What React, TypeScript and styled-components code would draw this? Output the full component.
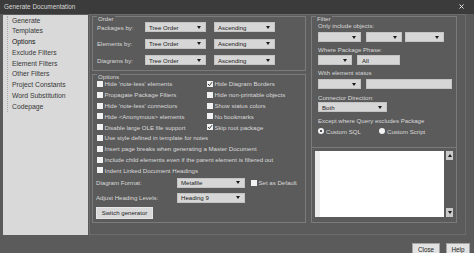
import { Fragment } from 'react';
import styled, { createGlobalStyle } from 'styled-components';

const GlobalStyle = createGlobalStyle`
	html, body {
		margin: 0;
		padding: 0;
		width: 474px;
		height: 253px;
		overflow: hidden;
		background: #5b5b5b;
	}
	* {
		box-sizing: border-box;
	}
`;

const fg = '#d9d9d9';
const bg = '#5b5b5b';
const line = '#7b7b7b';

const Arrow = ({ up }: { up?: boolean }) => (
	<svg width='4' height='3' viewBox='0 0 4 3'>
		<polygon points={up ? '0,3 4,3 2,0' : '0,0 4,0 2,3'} fill='#1a1a1a' />
	</svg>
);

const Tick = () => (
	<svg width='6' height='6' viewBox='0 0 6 6'>
		<polyline points='1,3 2.4,4.6 5,1.2' fill='none' stroke='#222' strokeWidth='0.9' />
	</svg>
);

const App = () => {
	const tree = [
		'Generate',
		'Templates',
		'Options',
		'Exclude Filters',
		'Element Filters',
		'Other Filters',
		'Project Constants',
		'Word Substitution',
		'Codepage',
	];
	const pairs: [string, boolean, string, boolean][] = [
		["Hide 'note-less' elements", false, 'Hide Diagram Borders', true],
		['Propagate Package Filters', false, 'Hide non-printable objects', false],
		["Hide 'note-less' connectors", false, 'Show status colors', false],
		['Hide <Anonymous> elements', false, 'No bookmarks', false],
		['Disable large OLE file support', false, 'Skip root package', true],
	];
	const singles = [
		'Use style defined in template for notes',
		'Insert page breaks when generating a Master Document',
		'Include child elements even if the parent element is filtered out',
		'Indent Linked Document Headings',
	];

	return (
		<>
			<GlobalStyle />
			<Window>
				<TitleBar>
					<span>Generate Documentation</span>
					<svg width='5' height='5' viewBox='0 0 5 5'>
						<path d='M0.5 0.5 L4.5 4.5 M4.5 0.5 L0.5 4.5' stroke='#e8e8e8' strokeWidth='1' />
					</svg>
				</TitleBar>
				<Body>
					<Tree>
						<TreeList>
							{tree.map((t) => (
								<TreeItem key={t} $active={t === 'Options'}>
									{t}
								</TreeItem>
							))}
						</TreeList>
					</Tree>
					<Frame>
						<LeftCol>
							<Group $h={55}>
								<Legend>Order</Legend>
								<OrderRows>
									{['Packages by:', 'Elements by:', 'Diagrams by:'].map((l) => (
										<Row key={l}>
											<RowLabel $w={48}>{l}</RowLabel>
											<Select $w={61}>
												Tree Order
												<Arrow />
											</Select>
											<Select $w={61} $ml={8}>
												Ascending
												<Arrow />
											</Select>
										</Row>
									))}
								</OrderRows>
							</Group>
							<Group $h={149}>
								<Legend>Options</Legend>
								<OptionsBody>
									<CheckGrid>
										{pairs.map(([a, ac, b, bc]) => (
											<Fragment key={a}>
												<Check>
													<Box>{ac && <Tick />}</Box>
													{a}
												</Check>
												<Check>
													<Box>{bc && <Tick />}</Box>
													{b}
												</Check>
											</Fragment>
										))}
									</CheckGrid>
									{singles.map((s) => (
										<Check key={s}>
											<Box />
											{s}
										</Check>
									))}
									<FormatRow $mt={2.2}>
										<RowLabel $w={81}>Diagram Format:</RowLabel>
										<Select $w={68}>
											Metafile
											<Arrow />
										</Select>
										<Check $ml={6}>
											<Box />
											Set as Default
										</Check>
									</FormatRow>
									<FormatRow $mt={5}>
										<RowLabel $w={81}>Adjust Heading Levels:</RowLabel>
										<Select $w={68}>
											Heading 9
											<Arrow />
										</Select>
									</FormatRow>
									<SwitchButton>Switch generator</SwitchButton>
								</OptionsBody>
							</Group>
						</LeftCol>
						<Group $h={207} $w={146}>
							<Legend>Filter</Legend>
							<FilterBody>
								<Caption $mt={3}>Only include objects:</Caption>
								<Row $mt={3}>
									<Select $w={43}>
										<Arrow />
									</Select>
									<Select $w={36} $ml={5}>
										<Arrow />
									</Select>
									<Select $w={39} $ml={3}>
										<Arrow />
									</Select>
								</Row>
								<Caption $mt={4}>Where Package Phase:</Caption>
								<Row $mt={2}>
									<Select $w={34}>
										<Arrow />
									</Select>
									<TextBox $w={43} $ml={5}>
										All
									</TextBox>
								</Row>
								<Caption $mt={3.5}>With element status</Caption>
								<Row $mt={3.5}>
									<Select $w={43}>
										<Arrow />
									</Select>
									<TextBox $w={86} $ml={5} />
								</Row>
								<Caption $mt={4.5}>Connector Direction:</Caption>
								<Row $mt={1.5}>
									<Select $w={69}>
										Both
										<Arrow />
									</Select>
								</Row>
								<Caption $mt={4.5}>Except where Query excludes Package</Caption>
								<RadioRow>
									<RadioOption $w={61}>
										<Radio $on />
										Custom SQL
									</RadioOption>
									<RadioOption>
										<Radio />
										Custom Script
									</RadioOption>
								</RadioRow>
							</FilterBody>
							<QueryBox>
								<QueryText />
								<ScrollBar>
									<ScrollArrow>
										<Arrow up />
									</ScrollArrow>
									<ScrollArrow>
										<Arrow />
									</ScrollArrow>
								</ScrollBar>
							</QueryBox>
						</Group>
					</Frame>
				</Body>
				<Footer>
					<DialogButton $w={28}>Close</DialogButton>
					<DialogButton $w={24}>Help</DialogButton>
				</Footer>
			</Window>
		</>
	);
};

export default App;

const Window = styled.div`
	width: 474px;
	height: 253px;
	background: ${bg};
	font-family: 'Liberation Sans', Arial, sans-serif;
	font-size: 6.1px;
	color: ${fg};
	display: flex;
	flex-direction: column;
	overflow: hidden;
`;

const TitleBar = styled.div`
	height: 14px;
	flex: none;
	background: #3b3b3b;
	color: #d6d6d6;
	font-size: 6.4px;
	display: flex;
	align-items: center;
	justify-content: space-between;
	padding: 0 10px 1px 4px;
`;

const Body = styled.div`
	height: 221px;
	flex: none;
	display: flex;
`;

const Tree = styled.div`
	width: 85px;
	margin: 1px 0 0 3px;
	background: #d9d9d9;
	padding-top: 0.5px;
`;

const TreeList = styled.div`
	margin-left: 4px;
	border-left: 1px dotted #a8a8a8;
`;

const TreeItem = styled.div<{ $active?: boolean }>`
	height: 10.75px;
	line-height: 10.75px;
	padding-left: 4px;
	font-size: 6.8px;
	color: ${({ $active }) => ($active ? '#111' : '#383838')};
	white-space: nowrap;
`;

const Frame = styled.div`
	width: 377px;
	height: 221px;
	margin-left: 1px;
	border: 1px solid #6c6c6c;
	padding: 1px 0 0 2px;
	display: flex;
	align-items: flex-start;
	gap: 5px;
`;

const LeftCol = styled.div`
	width: 214px;
	display: flex;
	flex-direction: column;
	gap: 3px;
`;

const Group = styled.div<{ $h: number; $w?: number }>`
	height: ${({ $h }) => $h}px;
	width: ${({ $w }) => ($w ? `${$w}px` : 'auto')};
	border: 1px solid ${line};
	display: flex;
	flex-direction: column;
`;

const Legend = styled.div`
	align-self: flex-start;
	height: 7px;
	line-height: 7px;
	margin: -2px 0 -3px 4px;
	padding: 0 1px;
	background: ${bg};
	white-space: nowrap;
`;

const OrderRows = styled.div`
	display: flex;
	flex-direction: column;
	gap: 6.5px;
	padding: 3px 0 0 4px;
`;

const Row = styled.div<{ $mt?: number }>`
	display: flex;
	align-items: center;
	height: 10px;
	margin-top: ${({ $mt }) => $mt ?? 0}px;
`;

const RowLabel = styled.div<{ $w: number }>`
	width: ${({ $w }) => $w}px;
	flex: none;
	white-space: nowrap;
`;

const Select = styled.div<{ $w: number; $ml?: number }>`
	width: ${({ $w }) => $w}px;
	height: 10px;
	margin-left: ${({ $ml }) => $ml ?? 0}px;
	flex: none;
	background: #d6d6d6;
	border: 1px solid #c4c4c4;
	color: #1c1c1c;
	display: flex;
	align-items: center;
	justify-content: space-between;
	padding: 0 4px 0 3px;
	white-space: nowrap;
	& > svg {
		margin-left: auto;
	}
`;

const TextBox = styled.div<{ $w: number; $ml?: number }>`
	width: ${({ $w }) => $w}px;
	height: 10px;
	margin-left: ${({ $ml }) => $ml ?? 0}px;
	background: #d6d6d6;
	border: 1px solid #c4c4c4;
	color: #1c1c1c;
	display: flex;
	align-items: center;
	padding-left: 4px;
`;

const OptionsBody = styled.div`
	display: flex;
	flex-direction: column;
	align-items: flex-start;
	padding: 1.6px 0 0 4px;
`;

const CheckGrid = styled.div`
	display: grid;
	grid-template-columns: 110px 1fr;
	grid-auto-rows: 10.8px;
`;

const Check = styled.div<{ $ml?: number }>`
	height: 10.8px;
	display: flex;
	align-items: center;
	white-space: nowrap;
	margin-left: ${({ $ml }) => $ml ?? 0}px;
`;

const Box = styled.div`
	width: 6px;
	height: 6px;
	flex: none;
	margin-right: 1.5px;
	background: #f1f1f1;
	display: flex;
	align-items: center;
	justify-content: center;
`;

const FormatRow = styled.div<{ $mt: number }>`
	display: flex;
	align-items: center;
	height: 10px;
	margin: ${({ $mt }) => $mt}px 0 0 -1px;
`;

const SwitchButton = styled.div`
	width: 57px;
	height: 12px;
	margin: 4px 0 0 -1px;
	background: #d9d9d9;
	border: 1px solid #e6e6e6;
	color: #1c1c1c;
	display: flex;
	align-items: center;
	justify-content: center;
	white-space: nowrap;
`;

const FilterBody = styled.div`
	display: flex;
	flex-direction: column;
	padding-left: 6px;
`;

const Caption = styled.div<{ $mt: number }>`
	height: 7px;
	line-height: 7px;
	margin-top: ${({ $mt }) => $mt}px;
	white-space: nowrap;
`;

const RadioRow = styled.div`
	display: flex;
	align-items: center;
	height: 8px;
	margin-top: 3.5px;
`;

const RadioOption = styled.div<{ $w?: number }>`
	width: ${({ $w }) => ($w ? `${$w}px` : 'auto')};
	display: flex;
	align-items: center;
	gap: 2px;
	white-space: nowrap;
`;

const Radio = styled.div<{ $on?: boolean }>`
	width: 6px;
	height: 6px;
	border-radius: 50%;
	background: #f4f4f4;
	display: flex;
	align-items: center;
	justify-content: center;
	&::after {
		content: '';
		width: 2.4px;
		height: 2.4px;
		border-radius: 50%;
		background: ${({ $on }) => ($on ? '#222' : 'transparent')};
	}
`;

const QueryBox = styled.div`
	margin-top: auto;
	height: 75px;
	border-top: 1px solid ${line};
	display: flex;
	padding: 3px 0 0 3px;
`;

const QueryText = styled.div`
	width: 129px;
	height: 66px;
	background: #ffffff;
	border-left: 5px solid #ebebeb;
`;

const ScrollBar = styled.div`
	width: 9px;
	height: 66px;
	display: flex;
	flex-direction: column;
	justify-content: space-between;
	align-items: flex-end;
`;

const ScrollArrow = styled.div`
	width: 7px;
	height: 9px;
	background: #c9c9c9;
	display: flex;
	align-items: center;
	justify-content: center;
`;

const Footer = styled.div`
	flex: 1;
	display: flex;
	justify-content: flex-end;
	align-items: flex-start;
	gap: 6px;
	padding: 8px 4px 0 0;
`;

const DialogButton = styled.div<{ $w: number }>`
	width: ${({ $w }) => $w}px;
	height: 14px;
	background: #e2e2e2;
	border: 1px solid #a5a5a5;
	color: #1c1c1c;
	font-size: 6.3px;
	display: flex;
	justify-content: center;
	padding-top: 2px;
`;
